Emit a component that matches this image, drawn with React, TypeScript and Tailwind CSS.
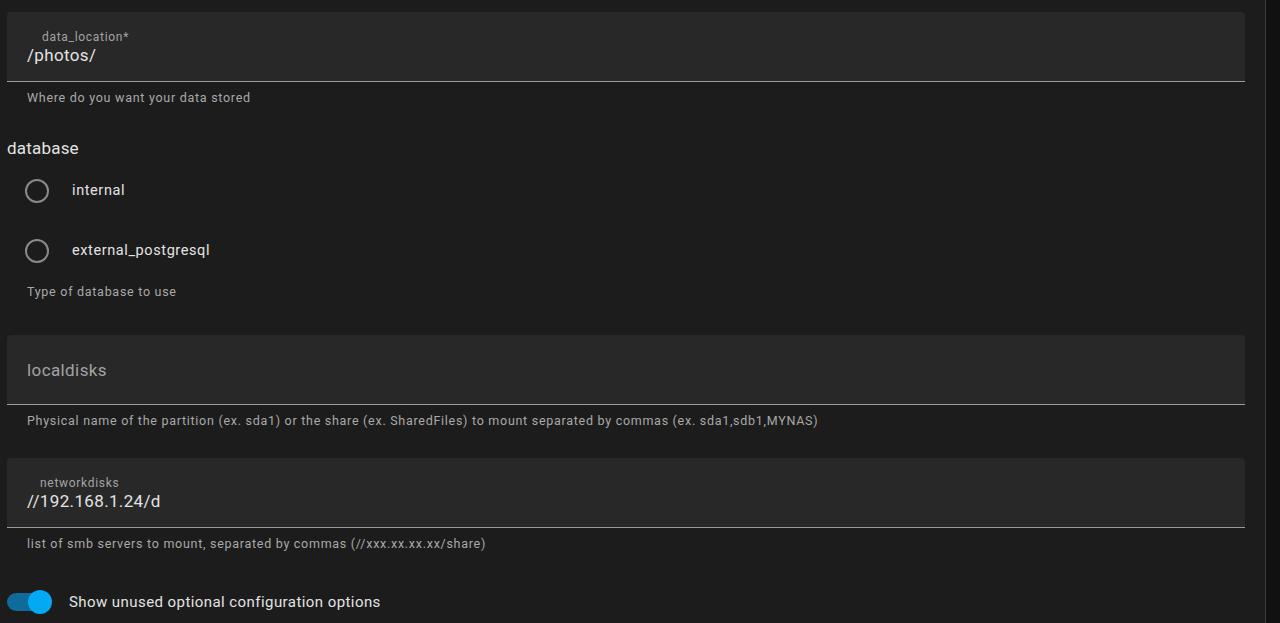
import React from "react";

const font = { fontFamily: "Roboto, 'Noto Sans', sans-serif" };

function Field({ label, value, placeholder, labelX }: { label?: string; value?: string; placeholder?: string; labelX: string }) {
  return (
    <div className="h-[70px] rounded-t-[4px] bg-[#282828] border-b border-[#9b9b9b] flex flex-col justify-start">
      {label ? (
        <>
          <div className={`mt-[18px] text-[12px] leading-[14px] tracking-[0.7px] text-[#a3a3a3] ${labelX}`}>{label}</div>
          <div className="mt-[1px] pl-[20px] text-[17px] leading-[20px] tracking-[0.35px] text-[#e3e3e3]">{value}</div>
        </>
      ) : (
        <div className="mt-[24px] pl-[20px] text-[17px] leading-[22px] tracking-[0.4px] text-[#a3a3a3]">{placeholder}</div>
      )}
    </div>
  );
}

function Helper({ children }: { children: React.ReactNode }) {
  return <div className="pl-[20px] text-[12.5px] leading-[16px] tracking-[0.72px] text-[#a9a9a9]">{children}</div>;
}

function Radio({ label }: { label: string }) {
  return (
    <div className="h-[60px] flex items-center pl-[18px]">
      <div className="w-[24px] h-[24px] rounded-full border-2 border-[#8a8a8a]" />
      <div className="ml-[23px] text-[14.5px] tracking-[0.6px] text-[#e3e3e3]">{label}</div>
    </div>
  );
}

export default function App() {
  return (
    <div className="w-[1280px] h-[623px] overflow-hidden flex bg-[#1c1c1c]" style={font}>
      <div className="flex-1 flex flex-col pl-[7px] pr-[20px] pt-[12px]">
        <Field label="data_location*" value="/photos/" labelX="pl-[35px]" />
        <div className="mt-[8px]"><Helper>Where do you want your data stored</Helper></div>
        <div className="mt-[32px] text-[17px] leading-[20px] tracking-[0.2px] text-[#e3e3e3]">database</div>
        <div className="mt-[3px]">
          <Radio label="internal" />
          <Radio label="external_postgresql" />
        </div>
        <div className="mt-[3px]"><Helper>Type of database to use</Helper></div>
        <div className="mt-[35px]"><Field placeholder="localdisks" labelX="" /></div>
        <div className="mt-[8px]"><Helper>Physical name of the partition (ex. sda1) or the share (ex. SharedFiles) to mount separated by commas (ex. sda1,sdb1,MYNAS)</Helper></div>
        <div className="mt-[29px]"><Field label="networkdisks" value="//192.168.1.24/d" labelX="pl-[33px]" /></div>
        <div className="mt-[8px]"><Helper>list of smb servers to mount, separated by commas (//xxx.xx.xx.xx/share)</Helper></div>
        <div className="mt-[37px] flex items-center h-[26px]">
          <div className="relative w-[46px] h-[26px] flex items-center">
            <div className="w-[44px] h-[18px] rounded-full bg-[#0f6b9c]" />
            <div className="absolute left-[21px] top-[1px] w-[24px] h-[24px] rounded-full bg-[#03a9f4]" />
          </div>
          <div className="ml-[16px] text-[15px] tracking-[0.43px] text-[#e3e3e3]">Show unused optional configuration options</div>
        </div>
      </div>
      <div className="w-[1px] bg-[#3c3c3c]" />
      <div className="w-[14px] bg-[#111111]" />
    </div>
  );
}
